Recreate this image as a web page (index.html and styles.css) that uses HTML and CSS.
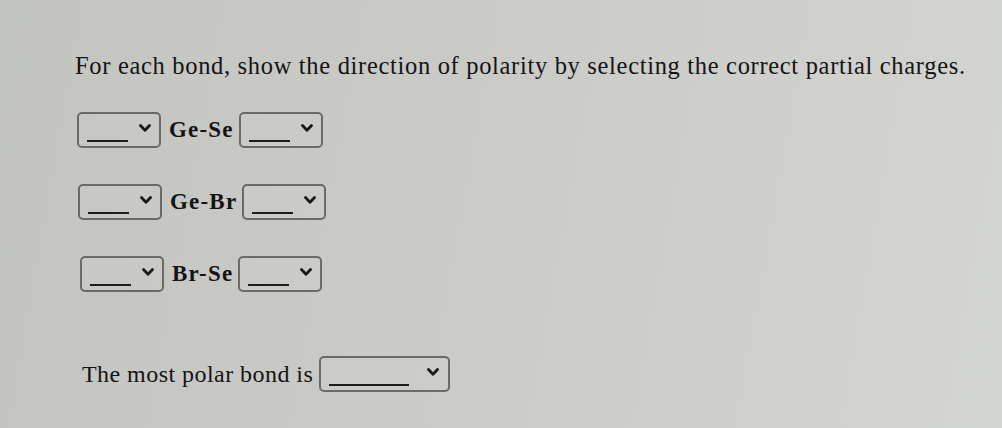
FILE: index.html
```html
<!DOCTYPE html>
<html>
<head>
<meta charset="utf-8">
<link rel="stylesheet" href="styles.css">
</head>
<body>
<div class="page">
  <p class="prompt">For each bond, show the direction of polarity by selecting the correct partial charges.</p>
  <div class="rows">
    <div class="row">
      <div class="sel"><span class="blank"></span><svg class="chev" viewBox="0 0 12 8"><polyline points="1.5,1.5 6,6.3 10.5,1.5"/></svg></div>
      <span class="bond">Ge-Se</span>
      <div class="sel"><span class="blank"></span><svg class="chev" viewBox="0 0 12 8"><polyline points="1.5,1.5 6,6.3 10.5,1.5"/></svg></div>
    </div>
    <div class="row">
      <div class="sel"><span class="blank"></span><svg class="chev" viewBox="0 0 12 8"><polyline points="1.5,1.5 6,6.3 10.5,1.5"/></svg></div>
      <span class="bond">Ge-Br</span>
      <div class="sel"><span class="blank"></span><svg class="chev" viewBox="0 0 12 8"><polyline points="1.5,1.5 6,6.3 10.5,1.5"/></svg></div>
    </div>
    <div class="row">
      <div class="sel"><span class="blank"></span><svg class="chev" viewBox="0 0 12 8"><polyline points="1.5,1.5 6,6.3 10.5,1.5"/></svg></div>
      <span class="bond">Br-Se</span>
      <div class="sel"><span class="blank"></span><svg class="chev" viewBox="0 0 12 8"><polyline points="1.5,1.5 6,6.3 10.5,1.5"/></svg></div>
    </div>
  </div>
  <div class="final">
    <span class="final-label">The most polar bond is</span>
    <div class="sel wide"><span class="blank"></span><svg class="chev" viewBox="0 0 12 8"><polyline points="1.5,1.5 6,6.3 10.5,1.5"/></svg></div>
  </div>
</div>
</body>
</html>
```

FILE: styles.css
```css
html, body {
  margin: 0;
  padding: 0;
}
body {
  width: 1002px;
  height: 428px;
  overflow: hidden;
  background: linear-gradient(100deg, #c3c5c0 0%, #cacbc6 45%, #d3d5d0 100%);
  font-family: "Liberation Serif", "Times New Roman", serif;
  color: #141414;
}
.page {
  padding: 51px 0 0 75px;
}
.prompt {
  margin: 0;
  font-size: 24.5px;
  line-height: 30px;
  letter-spacing: 0.68px;
}
.rows {
  margin-top: 31px;
  display: flex;
  flex-direction: column;
  gap: 36px;
}
.row {
  display: flex;
  align-items: center;
  height: 36px;
}
.row:nth-child(1) { margin-left: 2px; }
.row:nth-child(2) { margin-left: 3px; }
.row:nth-child(3) { margin-left: 5px; }
.bond {
  font-weight: bold;
  font-size: 23px;
  letter-spacing: 1.2px;
  margin: 0 5px 0 8px;
}
.sel {
  box-sizing: border-box;
  width: 84px;
  height: 36px;
  border: 2px solid #6a6b68;
  border-radius: 5px;
  display: flex;
  align-items: center;
  padding-left: 8px;
  background: rgba(255,255,255,0.05);
}
.blank {
  display: block;
  width: 41px;
  height: 2px;
  background: #1c1c1c;
  margin-top: 22px;
}
.chev {
  width: 12px;
  height: 8px;
  margin-left: auto;
  margin-right: 8px;
  margin-top: -4px;
}
.chev polyline {
  fill: none;
  stroke: #1a1a1a;
  stroke-width: 2.8;
  stroke-linecap: round;
  stroke-linejoin: round;
}
.final {
  margin-top: 64px;
  margin-left: 7px;
  display: flex;
  align-items: center;
  height: 36px;
}
.final-label {
  font-size: 24px;
  letter-spacing: 0.45px;
  margin-right: 6px;
}
.sel.wide {
  width: 131px;
}
.sel.wide .blank {
  width: 80px;
}
.sel.wide .chev {
  margin-right: 9px;
}
```
